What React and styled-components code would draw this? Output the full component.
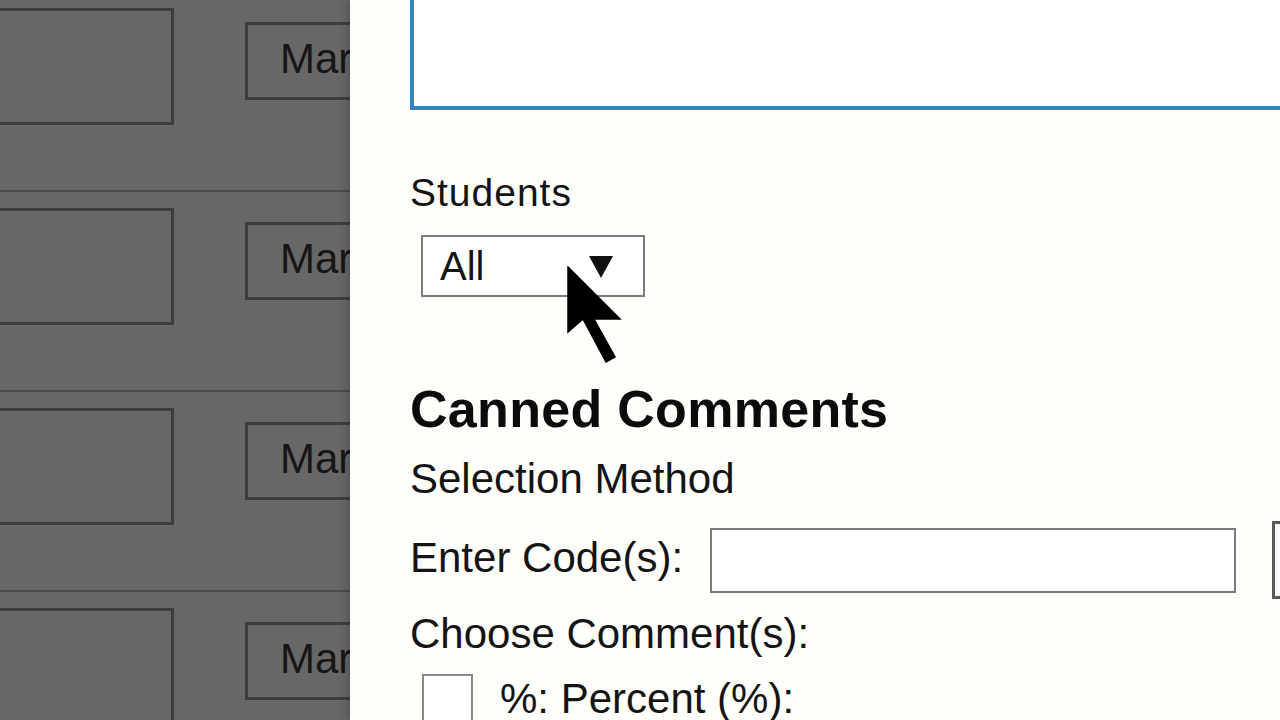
import styled, { createGlobalStyle } from "styled-components";

const GlobalStyle = createGlobalStyle`
  html,
  body {
    margin: 0;
    padding: 0;
    overflow: hidden;
    background: #fefefb;
    font-family: "Liberation Sans", Arial, sans-serif;
  }
`;

const Page = styled.div`
  position: relative;
  display: flex;
  width: 1280px;
  height: 720px;
  overflow: hidden;
`;

// dimmed gradebook behind the dialog
const Backdrop = styled.div`
  width: 350px;
  flex-shrink: 0;
  background: #676767;
  overflow: hidden;
`;

const RowList = styled.div`
  margin-top: -8px;
`;

const GradeRow = styled.div`
  display: flex;
  align-items: flex-start;
  height: 200px;
  box-sizing: border-box;
  padding-top: 16px;
  border-bottom: 2px solid #4b4b4b;
`;

const ScoreBox = styled.div`
  flex-shrink: 0;
  width: 184px;
  height: 117px;
  margin-left: -10px;
  box-sizing: border-box;
  border: 3px solid #3c3c3c;
`;

const MarkButton = styled.button`
  flex-shrink: 0;
  display: flex;
  align-items: center;
  width: 220px;
  height: 78px;
  margin: 14px 0 0 71px;
  padding: 0 0 4px 32px;
  box-sizing: border-box;
  border: 3px solid #3c3c3c;
  background: transparent;
  font-family: inherit;
  font-size: 42px;
  line-height: 48px;
  color: #161616;
`;

const Panel = styled.div`
  flex: 1;
  display: flex;
  flex-direction: column;
  align-items: flex-start;
  padding-left: 60px;
  background: #fefefb;
  overflow: hidden;
  box-shadow: -3px 0 8px rgba(0, 0, 0, 0.18);
`;

const CommentArea = styled.textarea`
  flex-shrink: 0;
  width: 1000px;
  height: 150px;
  margin-top: -40px;
  box-sizing: border-box;
  border: 4px solid #3587b7;
  background: #fffffd;
  resize: none;
  outline: none;
`;

const Label = styled.div`
  flex-shrink: 0;
  margin-top: ${(p) => p.$top || 0}px;
  font-size: 42px;
  line-height: 48px;
  color: #141414;
  white-space: nowrap;
`;

const StudentsLabel = styled(Label)`
  font-size: 39px;
  line-height: 44px;
  letter-spacing: 1px;
`;

const SelectBox = styled.div`
  flex-shrink: 0;
  display: flex;
  align-items: center;
  justify-content: space-between;
  width: 224px;
  height: 62px;
  margin: 20px 0 0 11px;
  padding: 0 30px 0 17px;
  box-sizing: border-box;
  border: 2px solid #7b7b7b;
  background: #fff;
  font-size: 40px;
  line-height: 48px;
  color: #151515;
`;

const SelectArrow = styled.span`
  width: 0;
  height: 0;
  margin-top: 2px;
  border-left: 12px solid transparent;
  border-right: 12px solid transparent;
  border-top: 22px solid #111;
`;

const Heading = styled.h2`
  flex-shrink: 0;
  margin: 82px 0 0;
  font-size: 52px;
  line-height: 60px;
  font-weight: 700;
  letter-spacing: 0.3px;
  color: #0b0b0b;
  white-space: nowrap;
`;

const CodeRow = styled.div`
  flex-shrink: 0;
  display: flex;
  align-items: center;
  height: 78px;
  margin-top: 18px;
`;

const CodeLabel = styled(Label)`
  margin-bottom: 4px;
`;

const CodeInput = styled.input`
  flex-shrink: 0;
  width: 526px;
  height: 65px;
  margin-left: 27px;
  box-sizing: border-box;
  border: 2px solid #7b7b7b;
  background: #fff;
  outline: none;
`;

const AddButton = styled.button`
  flex-shrink: 0;
  width: 140px;
  height: 78px;
  margin-left: 36px;
  box-sizing: border-box;
  border: 3px solid #5a5a5a;
  background: #fbfbfb;
`;

const CheckRow = styled.div`
  flex-shrink: 0;
  display: flex;
  align-items: flex-start;
  margin-top: 16px;
`;

const CheckBox = styled.span`
  flex-shrink: 0;
  width: 51px;
  height: 52px;
  margin-left: 12px;
  box-sizing: border-box;
  border: 2px solid #8a8a8a;
  background: #fff;
`;

const CheckText = styled(Label)`
  margin: 1px 0 0 27px;
`;

const Pointer = styled.svg`
  position: absolute;
  left: 567px;
  top: 266px;
  width: 56px;
  height: 100px;
`;

const rows = [0, 1, 2, 3];

const App = () => {
  return (
    <>
      <GlobalStyle />
      <Page>
        <Backdrop>
          <RowList>
            {rows.map((r) => (
              <GradeRow key={r}>
                <ScoreBox />
                <MarkButton>Mark</MarkButton>
              </GradeRow>
            ))}
          </RowList>
        </Backdrop>
        <Panel>
          <CommentArea readOnly />
          <StudentsLabel $top={61}>Students</StudentsLabel>
          <SelectBox>
            <span>All</span>
            <SelectArrow />
          </SelectBox>
          <Heading>Canned Comments</Heading>
          <Label $top={16}>Selection Method</Label>
          <CodeRow>
            <CodeLabel>Enter Code(s):</CodeLabel>
            <CodeInput />
            <AddButton />
          </CodeRow>
          <Label $top={11}>Choose Comment(s):</Label>
          <CheckRow>
            <CheckBox />
            <CheckText>%: Percent (%):</CheckText>
          </CheckRow>
        </Panel>
        <Pointer viewBox="0 0 56 100">
          <path
            d="M1 1 L1 66 L16 53 L39 96 L48 91 L27 53 L53 53 Z"
            fill="#000"
            stroke="#000"
            strokeWidth="1.5"
            strokeLinejoin="miter"
          />
        </Pointer>
      </Page>
    </>
  );
};

export default App;
